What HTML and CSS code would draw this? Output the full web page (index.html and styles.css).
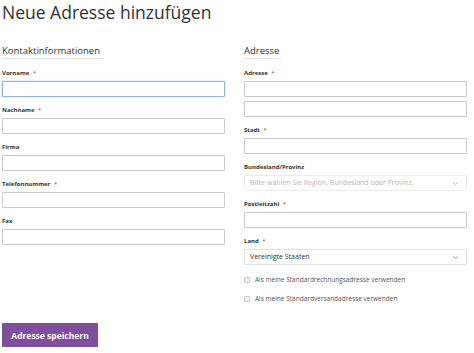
FILE: index.html
```html
<!DOCTYPE html>
<html lang="de">
<head>
    <meta charset="UTF-8">
    <meta name="viewport" content="width=device-width, initial-scale=1.0">
    <title>Neue Adresse hinzufügen</title>
    <link rel="stylesheet" href="styles.css">
</head>
<body>
    <h1>Neue Adresse hinzufügen</h1>

    <form class="address-form">
        <div class="columns">
            <fieldset class="column">
                <legend class="section-title">Kontaktinformationen</legend>

                <div class="field">
                    <label>Vorname <span class="req">*</span></label>
                    <input type="text" class="focused">
                </div>
                <div class="field">
                    <label>Nachname <span class="req">*</span></label>
                    <input type="text">
                </div>
                <div class="field">
                    <label>Firma</label>
                    <input type="text">
                </div>
                <div class="field">
                    <label>Telefonnummer <span class="req">*</span></label>
                    <input type="text">
                </div>
                <div class="field">
                    <label>Fax</label>
                    <input type="text">
                </div>
            </fieldset>

            <fieldset class="column">
                <legend class="section-title">Adresse</legend>

                <div class="field">
                    <label>Adresse <span class="req">*</span></label>
                    <input type="text">
                    <input type="text" class="second-line">
                </div>
                <div class="field">
                    <label>Stadt <span class="req">*</span></label>
                    <input type="text">
                </div>
                <div class="field">
                    <label>Bundesland/Provinz</label>
                    <div class="select-wrap">
                        <select class="disabled" disabled>
                            <option>Bitte wählen Sie Region, Bundesland oder Provinz.</option>
                        </select>
                        <svg class="chevron" width="7" height="5" viewBox="0 0 7 5"><path d="M1.2 1.4 L3.5 3.5 L5.8 1.4" fill="none" stroke="#b5b5b5" stroke-width="0.9"/></svg>
                    </div>
                </div>
                <div class="field">
                    <label>Postleitzahl <span class="req">*</span></label>
                    <input type="text">
                </div>
                <div class="field">
                    <label>Land <span class="req">*</span></label>
                    <div class="select-wrap">
                        <select>
                            <option>Vereinigte Staaten</option>
                        </select>
                        <svg class="chevron" width="7" height="5" viewBox="0 0 7 5"><path d="M1.2 1.4 L3.5 3.5 L5.8 1.4" fill="none" stroke="#999999" stroke-width="0.9"/></svg>
                    </div>
                </div>

                <label class="check"><input type="checkbox"> Als meine Standardrechnungsadresse verwenden</label>
                <label class="check"><input type="checkbox"> Als meine Standardversandadresse verwenden</label>
            </fieldset>
        </div>

        <button type="button" class="save-btn">Adresse speichern</button>
    </form>
</body>
</html>
```

FILE: styles.css
```css
body {
    font-family: 'Open Sans', 'Liberation Sans', sans-serif;
    background-color: #ffffff;
    color: #333333;
    margin: 0;
    padding: 0 7px 0 2px;
}

h1 {
    font-size: 17.5px;
    font-weight: 400;
    line-height: 20px;
    margin: 2px 0 0 0;
    color: #333333;
}

.columns {
    display: flex;
    gap: 19px;
    margin-top: 22px;
}

.column {
    flex: 1;
    border: none;
    margin: 0;
    padding: 0;
    min-width: 0;
}

.section-title {
    font-size: 9.5px;
    line-height: 13px;
    padding: 0 3px 1px 0;
    margin-left: 0;
    border-bottom: 1px solid #e4e4e4;
    color: #333333;
    float: left;
}

.section-title + .field {
    clear: both;
    padding-top: 10px;
}

.field {
    display: flex;
    flex-direction: column;
    margin-bottom: 9px;
}

.field label {
    font-size: 6px;
    font-weight: 700;
    line-height: 9px;
    margin-bottom: 3px;
    color: #333333;
}

.req {
    color: #e02b27;
    font-weight: 400;
    margin-left: 2px;
}

input[type="text"], select {
    display: block;
    box-sizing: border-box;
    height: 16px;
    width: 100%;
    border: 1px solid #cccccc;
    border-radius: 1px;
    background-color: #ffffff;
    padding: 0 7px;
    font-family: inherit;
    font-size: 7px;
    line-height: 14px;
    color: #333333;
    margin: 0;
}

input.focused {
    border-color: #8fb7d6;
    box-shadow: 0 0 2px #a9cbe6;
}

input.second-line {
    margin-top: 4px;
}

.select-wrap {
    position: relative;
    height: 16px;
}

select {
    appearance: none;
    -webkit-appearance: none;
    padding: 0 5px;
    border-color: #e2e2e2;
}

select.disabled {
    border-color: #ececec;
    color: #b8b8b8;
    opacity: 1;
}

.chevron {
    position: absolute;
    right: 8px;
    top: 6px;
}

.check {
    display: flex;
    align-items: center;
    gap: 5px;
    font-size: 6.5px;
    color: #555555;
    line-height: 9px;
    margin-bottom: 10px;
}

.check:first-of-type {
    margin-top: 10px;
}

.check input {
    appearance: none;
    -webkit-appearance: none;
    width: 6px;
    height: 6px;
    margin: 0;
    border: 1px solid #c9c9c9;
    border-radius: 1px;
    background-color: #f2f2f2;
}

.save-btn {
    margin-top: 10px;
    height: 24px;
    width: 96px;
    padding: 0;
    background-color: #7f4e9e;
    border: none;
    border-radius: 1px;
    color: #ffffff;
    font-family: inherit;
    font-size: 8.5px;
    font-weight: 700;
    cursor: pointer;
}
```
